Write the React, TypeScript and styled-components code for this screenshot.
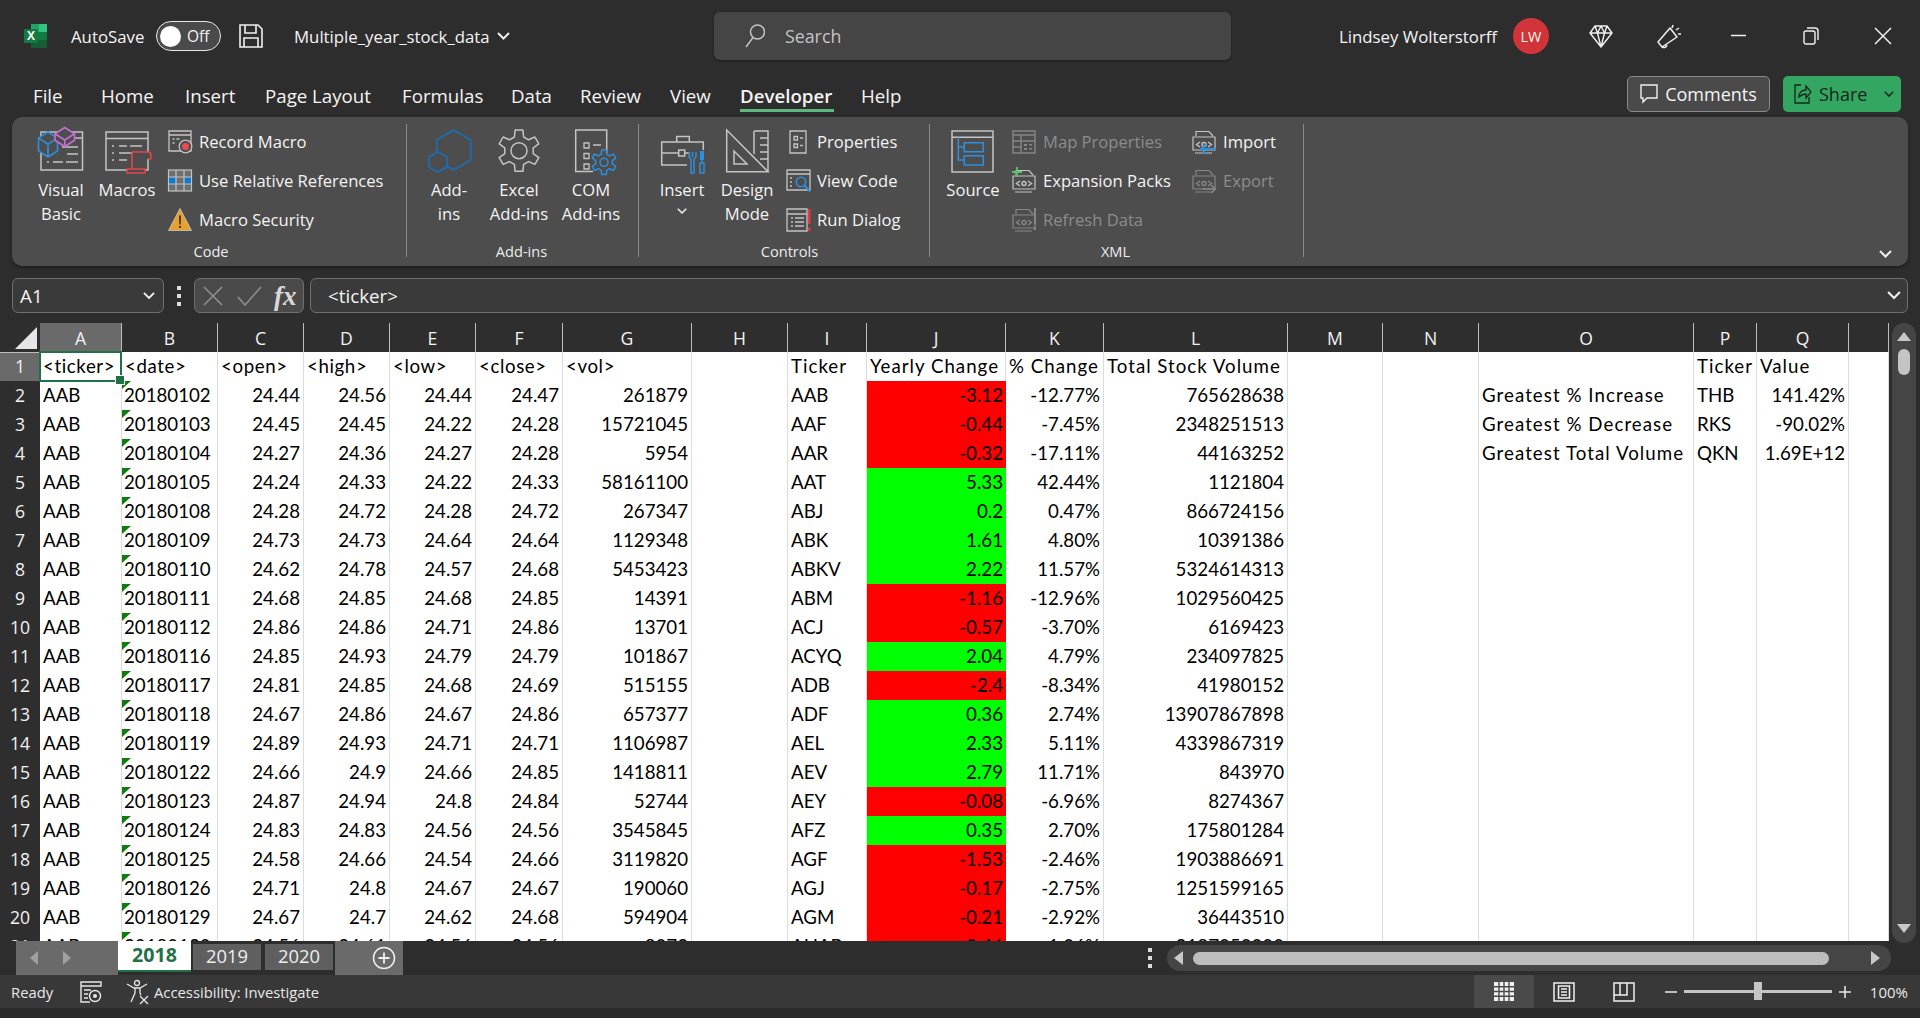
import React from "react";
import styled, { createGlobalStyle } from "styled-components";

const UI = '"Open Sans","Noto Sans",sans-serif';
const CELL = '"Lato","Liberation Sans",sans-serif';
const LINE = "#c4c4c4";
const BLUE = "#2f8fdc";

const Global = createGlobalStyle`
  html, body { margin: 0; padding: 0; background: #2d2d2d; overflow: hidden; }
  * { box-sizing: border-box; }
`;

const App_ = styled.div`
  width: 1920px; height: 1018px; display: flex; flex-direction: column;
  background: #2d2d2d; color: #f4f4f4; font-family: ${UI}; overflow: hidden;
`;

/* ---------- title bar ---------- */
const TitleBar = styled.div`
  height: 66px; display: flex; align-items: center; padding: 6px 0 0 24px; font-size: 16.8px; flex: none;
`;
const AutoSave = styled.span` margin-left: 23px; width: 85px; `;
const Toggle = styled.div`
  width: 65px; height: 30px; border: 1.5px solid #e8e8e8; border-radius: 15px; background: #4a4a4a;
  display: flex; align-items: center; padding-left: 3px; gap: 6px; font-size: 15.5px;
`;
const Knob = styled.span` width: 21px; height: 21px; border-radius: 50%; background: #fff; `;
const SaveSlot = styled.span` margin-left: 18px; display: flex; `;
const FileName = styled.span` margin-left: 31px; width: 203px; white-space: nowrap; `;
const SearchBox = styled.div`
  margin-left: 204px; width: 517px; height: 48px; background: #454545; border-radius: 6px; display: flex; align-items: center;
  padding-left: 31px; gap: 20px; color: #c4c4c4; box-shadow: 0 1px 2px #1c1c1c; font-size: 17.8px;
`;
const TitleRight = styled.div` margin-left: auto; display: flex; align-items: center; `;
const UserName = styled.span` width: 174px; white-space: nowrap; `;
const Avatar = styled.span`
  width: 36px; height: 36px; border-radius: 50%; background: #d13438; display: flex; align-items: center; justify-content: center; font-size: 14.5px;
`;
const WinBtn = styled.span<{ $ml: number }>` margin-left: ${(p) => p.$ml}px; display: flex; `;

/* ---------- ribbon tabs ---------- */
const TabRow = styled.div` height: 51px; display: flex; flex: none; padding-left: 33px; font-size: 18.7px; position: relative; `;
const MenuTab = styled.div<{ $w: number; $active?: boolean }>`
  width: ${(p) => p.$w}px; padding-top: 17px; line-height: 26px; position: relative; white-space: nowrap;
  font-weight: ${(p) => (p.$active ? 600 : 400)};
  ${(p) => p.$active && `&::after { content: ""; position: absolute; left: 0; top: 43px; width: 94px; height: 3px; background: #5cb87e; }`}
`;
const RightBtns = styled.div` margin-left: auto; display: flex; padding: 10px 19px 0 0; gap: 13px; `;
const CommentBtn = styled.div`
  width: 143px; height: 36px; border: 1px solid #8a8a8a; border-radius: 5px; background: #4a4a4a; display: flex; align-items: center;
  justify-content: center; gap: 7px; font-size: 18px;
`;
const ShareBtn = styled.div`
  width: 118px; height: 36px; border-radius: 5px; background: #33a661; color: #14261b; display: flex; align-items: center; padding-left: 11px; gap: 7px; font-size: 18px;
`;
const ShareCaret = styled.span` margin-left: 10px; display: flex; `;

/* ---------- ribbon ---------- */
const Ribbon = styled.div`
  height: 149px; margin: 0 12px; background: #4d4d4d; border-radius: 10px; flex: none; display: flex; padding: 7px 0 6px;
  box-shadow: 0 2px 3px #1e1e1e; font-size: 16.6px;
`;
const Group = styled.div<{ $w: number; $pl: number }>`
  width: ${(p) => p.$w}px; padding-left: ${(p) => p.$pl}px; display: flex; flex-direction: column;
`;
const GroupBody = styled.div` display: flex; flex: 1; `;
const GroupLabel = styled.div<{ $shift?: number }>`
  height: 18px; line-height: 18px; text-align: center; font-size: 14.6px; color: #ececec; padding-right: ${(p) => p.$shift ?? 0}px;
`;
const Sep = styled.div` width: 1px; height: 133px; background: #8a8a8a; flex: none; `;
const Big = styled.div<{ $w: number }>`
  width: ${(p) => p.$w}px; display: flex; flex-direction: column; align-items: center; text-align: center; line-height: 24px; padding-top: 1px; white-space: nowrap;
  svg { margin-bottom: 5px; overflow: visible; }
`;
const InsertCaret = styled.span` display: flex; height: 24px; align-items: center; `;
const SmallCol = styled.div<{ $ml?: number; $w?: number }>`
  margin: -2px 0 0 ${(p) => p.$ml ?? 0}px; width: ${(p) => (p.$w ? `${p.$w}px` : "auto")}; display: flex; flex-direction: column;
`;
const SmallRow = styled.div<{ $dim?: boolean }>`
  height: 39px; display: flex; align-items: center; gap: 7px; white-space: nowrap; color: ${(p) => (p.$dim ? "#8c8c8c" : "#f4f4f4")};
  svg { overflow: visible; flex: none; ${(p) => (p.$dim ? "opacity: .48;" : "")} }
`;
const Collapse = styled.div` margin-left: auto; align-self: flex-end; padding: 0 16px 2px 0; display: flex; `;

/* ---------- formula bar ---------- */
const FormulaBar = styled.div` height: 35px; margin: 12px 12px 10px; display: flex; align-items: center; flex: none; `;
const NameBox = styled.div`
  width: 152px; height: 35px; border: 1px solid #6e6e6e; border-radius: 6px; background: #3a3a3a; display: flex; align-items: center; justify-content: space-between;
  padding: 0 8px 0 7px; font-size: 18.8px;
`;
const Dots = styled.div<{ $ml: number; $mr: number }>`
  margin: 0 ${(p) => p.$mr}px 0 ${(p) => p.$ml}px; width: 4px; display: flex; flex-direction: column; gap: 4px;
  i { width: 4px; height: 4px; background: #dcdcdc; display: block; }
`;
const FxBox = styled.div`
  width: 110px; height: 35px; border: 1px solid #6e6e6e; border-radius: 6px; background: #4a4a4a; display: flex; align-items: center; padding-left: 8px; gap: 14px;
`;
const FxText = styled.span` font-family: "Liberation Serif", serif; font-style: italic; font-weight: 700; font-size: 27px; line-height: 30px; color: #d8d8d8; margin-left: -2px; `;
const FormulaInput = styled.div`
  flex: 1; margin-left: 6px; height: 35px; border: 1px solid #6e6e6e; border-radius: 6px; background: #3a3a3a; display: flex; align-items: center;
  justify-content: space-between; padding: 0 6px 0 17px; font-size: 18.8px;
`;

/* ---------- sheet ---------- */
const SheetArea = styled.div` height: 618px; display: flex; flex: none; `;
const Pane = styled.div` width: 1889px; height: 618px; overflow: hidden; position: relative; flex: none; `;
const COLS = [40, 82, 96, 86, 86, 86, 87, 129, 96, 79, 139, 98, 184, 95, 96, 215, 63, 92, 40];
const Row = styled.div`
  display: grid; grid-template-columns: ${COLS.map((c) => `${c}px`).join(" ")}; height: 29px;
`;
const ColHead = styled.div<{ $on?: boolean }>`
  background: ${(p) => (p.$on ? "#6a6a6a" : "#2e2e2e")}; border-right: 1px solid #bdbdbd; border-bottom: 1px solid #bdbdbd; font-size: 17.6px; line-height: 27px; text-align: center; padding-top: 2px; color: #f2f2f2;
`;
const Corner = styled.div`
  background: #2e2e2e; border-bottom: 1px solid #bdbdbd; position: relative;
  &::after { content: ""; position: absolute; left: 15px; top: 4px; width: 22px; height: 22px; background: #e6e6e6; clip-path: polygon(100% 0, 100% 100%, 0 100%); }
`;
const RowHead = styled.div<{ $on?: boolean }>`
  background: ${(p) => (p.$on ? "#6a6a6a" : "#2e2e2e")}; border-bottom: 1px solid #bdbdbd; font-size: 17.6px; line-height: 29px; text-align: center; color: #f2f2f2;
`;
const Cell = styled.div<{ $right?: boolean; $fill?: string; $tri?: boolean; $ls?: number }>`
  background: ${(p) => p.$fill ?? "#fff"}; color: #000; font-family: ${CELL}; font-size: 18.7px; line-height: 29px; white-space: nowrap; position: relative;
  padding: 0 3px 0 ${(p) => (p.$tri ? 2 : 3)}px; text-align: ${(p) => (p.$right ? "right" : "left")};
  letter-spacing: ${(p) => p.$ls ?? 0}px;
  ${(p) => (p.$fill ? "" : "border-right: 1px solid #dcdcdc; border-bottom: 1px solid #dcdcdc;")}
  ${(p) => p.$tri && `&::before { content: ""; position: absolute; left: 0; top: 0; width: 9px; height: 8px; background: #107c10; clip-path: polygon(0 0, 100% 0, 0 100%); }`}
`;
const Selection = styled.div`
  position: absolute; left: 39px; top: 28px; width: 83px; height: 31px; border: 2px solid #1f7246; pointer-events: none;
  &::after { content: ""; position: absolute; right: -5px; bottom: -5px; width: 8px; height: 8px; background: #1f7246; border: 1px solid #fff; }
`;
const VScroll = styled.div`
  margin: 0 0 0 3px; width: 24px; height: 620px; background: #454545; border-radius: 12px; position: relative; display: flex; flex-direction: column; align-items: center; padding-top: 9px;
`;
const VThumb = styled.div` width: 12px; height: 26px; border-radius: 6px; background: #c4c4c4; margin-top: 8px; `;
const Tri = styled.div<{ $dir: "up" | "down" | "left" | "right"; $c?: string; $s?: number }>`
  flex: none; background: ${(p) => p.$c ?? "#c8c8c8"};
  width: ${(p) => (p.$dir === "up" || p.$dir === "down" ? 14 : p.$s ?? 8)}px; height: ${(p) => (p.$dir === "up" || p.$dir === "down" ? 9 : 14)}px;
  clip-path: ${(p) =>
    ({ up: "polygon(50% 0,100% 100%,0 100%)", down: "polygon(0 0,100% 0,50% 100%)", left: "polygon(100% 0,100% 100%,0 50%)", right: "polygon(0 0,100% 50%,0 100%)" })[p.$dir]};
`;
const VDown = styled.div` margin-top: auto; padding-bottom: 10px; `;

/* ---------- sheet tabs ---------- */
const SheetBar = styled.div` height: 34px; display: flex; flex: none; padding-left: 16px; position: relative; `;
const Nav = styled.div` width: 102px; background: #6a6a6a; display: flex; align-items: center; padding-left: 14px; gap: 25px; `;
const ActiveTab = styled.div`
  width: 73px; height: 31px; background: #fff; border-bottom: 2px solid #1f7246; color: #1f7246; font-weight: 700; font-size: 19.6px; text-align: center; line-height: 28px;
`;
const SheetTab = styled.div`
  width: 72px; height: 31px; background: #5f5f5f; border: 2px solid #2d2d2d; border-top-width: 3px; color: #eee; font-size: 18.4px; text-align: center; line-height: 24px;
`;
const AddZone = styled.div`
  width: 68px; background: #6a6a6a; margin-left: 0; display: flex; align-items: center; justify-content: flex-end; padding: 0 7px 0 0;
`;
const SheetRight = styled.div` margin-left: auto; display: flex; align-items: center; padding-right: 29px; `;
const HTrack = styled.div`
  margin-left: 15px; width: 724px; height: 26px; background: #454545; border-radius: 13px; display: flex; align-items: center; padding: 0 11px 0 7px;
`;
const HThumb = styled.div` margin-left: 10px; width: 636px; height: 13px; background: #bdbdbd; border-radius: 7px; margin-right: auto; `;

/* ---------- status ---------- */
const StatusBar = styled.div` height: 33px; background: #383838; display: flex; align-items: center; padding-left: 11px; font-size: 14.8px; flex: none; color: #e8e8e8; `;
const Ready = styled.span` width: 69px; padding-top: 1px; `;
const StatusIcon = styled.span<{ $ml?: number }>` display: flex; margin-left: ${(p) => p.$ml ?? 0}px; `;
const Access = styled.span` margin-left: 4px; padding-top: 1px; white-space: nowrap; `;
const StatusRight = styled.div` margin-left: auto; display: flex; align-items: center; height: 33px; `;
const ViewBtn = styled.div<{ $on?: boolean }>`
  width: 60px; height: 33px; display: flex; align-items: center; justify-content: center; background: ${(p) => (p.$on ? "#4a4a4a" : "transparent")};
`;
const Zoomer = styled.div` margin-left: 11px; display: flex; align-items: center; gap: 7px; font-size: 20px; font-weight: 300; `;
const ZoomTrack = styled.div`
  width: 148px; height: 3px; background: #c4c4c4; position: relative;
  &::after { content: ""; position: absolute; left: 70px; top: -8px; width: 8px; height: 18px; background: #c4c4c4; }
`;
const Percent = styled.span` margin: 0 12px 0 19px; font-size: 15px; `;
const BottomStrip = styled.div` height: 10px; background: #2b2b2b; flex: none; `;

/* ---------- drawings ---------- */
const gear = (cx: number, cy: number, R: number, r: number, n = 6) => {
  const pts: string[] = [];
  for (let i = 0; i < n; i++) {
    const a = (i * 2 * Math.PI) / n - Math.PI / 2;
    const w = Math.PI / n;
    const p = (rad: number, t: number) => `${(cx + rad * Math.cos(t)).toFixed(1)} ${(cy + rad * Math.sin(t)).toFixed(1)}`;
    pts.push(p(r, a - w * 0.62), p(R, a - w * 0.36), p(R, a + w * 0.36), p(r, a + w * 0.62));
  }
  return `M${pts.join("L")}Z`;
};

const S = { fill: "none", stroke: LINE, strokeWidth: 1.5 } as const;
const B = { fill: "none", stroke: BLUE, strokeWidth: 1.5 } as const;
const I48 = ({ children }: { children: React.ReactNode }) => <svg width="48" height="48" viewBox="0 0 48 48">{children}</svg>;
const I24 = ({ children }: { children: React.ReactNode }) => <svg width="24" height="24" viewBox="0 0 24 24">{children}</svg>;

const cube = (x: number, y: number, w: number, h: number, c: string) => {
  const t = w * 0.32;
  return (
    <g fill="#4d4d4d" stroke={c} strokeWidth="1.6" strokeLinejoin="round">
      <path d={`M${x + w / 2} ${y}L${x + w} ${y + t}V${y + h - t}L${x + w / 2} ${y + h}L${x} ${y + h - t}V${y + t}Z`} />
      <path d={`M${x} ${y + t}L${x + w / 2} ${y + 2 * t}L${x + w} ${y + t}M${x + w / 2} ${y + 2 * t}V${y + h}`} fill="none" />
    </g>
  );
};

const VBIcon = () => (
  <I48>
    <path {...S} d="M4 7h41.5v38H4zM4 13h41.5" />
    <path {...S} d="M10 37h2M16 37h10M29 37h12M30 29h11M25 22h16" strokeWidth="1.3" />
    {cube(1.5, 7, 19, 25, BLUE)}
    {cube(18, 2.5, 19.5, 19, "#c56fd3")}
  </I48>
);
const MacrosIcon = () => (
  <I48>
    <path {...S} d="M3 7h42v38H3zM3 13.5h42" />
    <path {...S} strokeWidth="1.3" d="M9 21h2M16 21h8M27 21h12M9 28h2M16 28h14M9 35h2M16 35h8" />
    <path fill="#4d4d4d" stroke="#e2474c" strokeWidth="1.6" d="M29 27h16c2 0 2.8 1 2.8 2.8V34h-3M29 27c0 0 0 1 0 3V44M44.500 27v0M29 44h-5v4h18v-4H29" />
  </I48>
);
const AddInsIcon = () => (
  <I48>
    <path fill="none" stroke="#1a6fb5" strokeWidth="1.7" strokeLinejoin="round" d="M11.700 27V15L28.700 5l17 10v20l-17 10-6.500-3.800" />
    <path fill="none" stroke="#1a6fb5" strokeWidth="1.7" strokeLinejoin="round" d="M13 27l9 5v10l-9 5-9-5V32z" />
  </I48>
);
const ExcelAddIcon = () => (
  <I48>
    <path {...S} strokeLinejoin="round" d={gear(24, 25.7, 21, 14.5)} />
    <circle {...S} cx="24" cy="25.700" r="8" />
  </I48>
);
const ComIcon = () => (
  <I48>
    <path {...S} d="M26 46.500H8.700V5h31v23" />
    <path {...S} d="M17 18h5v5h-5zM17 28.500h5v5h-5zM17 39h5v5h-5z" strokeWidth="1.3" />
    <path {...S} d="M26 20h8M26 30h4" strokeWidth="1.3" />
    <path {...B} strokeLinejoin="round" d={gear(37, 37.3, 12.5, 8.5)} fill="#4d4d4d" />
    <circle {...B} cx="37" cy="37.300" r="4" />
  </I48>
);
const InsertIcon = () => (
  <I48>
    <path {...S} d="M29 40H3.700V17h41.600v8M18.700 17v-5.500h12.600V17M3.700 28h17M27 28h5" />
    <rect {...S} x="20.700" y="25" width="6" height="6" />
    <path {...B} d="M31 27v5l2 2v14h3V34l2-2v-5M34.500 27v5" />
    <path fill={BLUE} d="M42 26h4v9h-4z" />
    <path {...B} d="M44 35v3M42 38h4v10h-4z" />
  </I48>
);
const DesignIcon = () => (
  <I48>
    <path {...S} d="M3.700 5v41.700H45L3.700 5zM11 26v13h13zM31 6h14v40.700M31 6v23" strokeLinejoin="miter" />
    <path {...S} d="M37 13h8M37 20h8M37 27h8M37 34h8" strokeWidth="1.3" />
  </I48>
);
const SourceIcon = () => (
  <I48>
    <path {...S} d="M3 6h41v41H3zM3 12.300h41" />
    <path {...B} d="M15.300 17.700h19v9h-19zM15.300 30.700h19V40h-19zM9.300 12.300V35h6M9.300 22h6" />
  </I48>
);
const RecordIcon = () => (
  <I24>
    <path {...S} d="M1 1h22v20H1zM1 5h22M4.500 9h2M4.500 13h2M8.500 9h3" strokeWidth="1.3" />
    <circle cx="17.500" cy="16.500" r="6.300" fill="#4d4d4d" stroke={LINE} strokeWidth="1.3" />
    <circle cx="17.500" cy="16.500" r="3.500" fill="#ea4a50" />
  </I24>
);
const RelRefIcon = () => (
  <I24>
    <rect x="0.500" y="1" width="23" height="21" fill="#6f6f6f" stroke={LINE} strokeWidth="1.200" />
    <rect x="1" y="8" width="7" height="7" fill="#0f7ad1" />
    <rect x="16" y="8" width="7" height="7" fill="#0f7ad1" />
    <path fill="none" stroke={LINE} strokeWidth="1.200" d="M8 1v21M16 1v21M1 8h22M1 15h22" />
  </I24>
);
const SecurityIcon = () => (
  <I24>
    <path d="M12 0.500L23.500 22.500H0.500z" fill="#e8a02f" stroke="#c9c9c9" strokeWidth="0.800" strokeLinejoin="round" />
    <path d="M11 7.500h2l-.3 9h-1.400zM11 18h2v2h-2z" fill="#333" />
  </I24>
);
const PropsIcon = () => (
  <I24>
    <path {...S} d="M4 1h16v22H4zM8 6.500h3.500V10H8zM8 14h3.500v3.500H8zM14 8h3M14 15.500h3" strokeWidth="1.300" />
  </I24>
);
const ViewCodeIcon = () => (
  <I24>
    <path {...S} d="M1 1h23v20H1zM1 5h23" strokeWidth="1.300" />
    <path {...S} d="M4 9h2M4 13h2M4 17h2" strokeWidth="1.300" />
    <circle cx="15" cy="13" r="4.700" fill="none" stroke={BLUE} strokeWidth="1.600" />
    <path stroke={BLUE} strokeWidth="2" d="M18.500 16.500l5.500 6" />
  </I24>
);
const RunDialogIcon = () => (
  <I24>
    <path {...S} d="M1 1h20v22H1zM1 6h20M5 10h2M9 10h9M5 14h2M9 14h9M5 18h2M9 18h9" strokeWidth="1.300" />
    <path d="M22 1h2.400v15H22zM22 19h2.400v4H22z" fill="#e8383e" />
  </I24>
);
const codeGlyph = "M8 12l-3.500 2.500L8 17M16 12l3.500 2.500L16 17";
const MapIcon = () => (
  <I24>
    <path {...S} d="M1 1h22v22H1zM1 5h22M1 11h8M1 17h8M9 5v18M9 11h14v12" strokeWidth="1.400" />
    <path fill={LINE} d="M12 14h3v2h-3zM12 18h3v2h-3zM17 14h3v1.500h-3zM17 18h3v1.500h-3z" />
  </I24>
);
const DocIcon = ({ arrow, plus, bar }: { arrow?: string; plus?: boolean; bar?: boolean }) => (
  <I24>
    <path {...S} strokeWidth="1.200" d="M4 6V1.500h13L21 6M1 7h22v13H1zM3 23h17" />
    <path {...S} strokeWidth="1.400" d={codeGlyph} />
    <circle {...S} strokeWidth="1.400" cx="12" cy="14.500" r="2" />
    {plus && <path stroke="#58c26e" strokeWidth="1.800" d="M5 -2v10M0 3h10" />}
    {bar && <path stroke={LINE} strokeWidth="2" d="M23 0v16M23 19v3" />}
    {arrow === "in" && <path fill="none" stroke={BLUE} strokeWidth="1.800" d="M24 19H10M14 14l-5 5 5 5" />}
    {arrow === "out" && <path fill="none" stroke={LINE} strokeWidth="1.500" d="M10 20h13M19 16l4.500 4-4.500 4" />}
  </I24>
);

const ExcelLogo = () => (
  <svg width="24" height="26" viewBox="0 0 24 26">
    <path fill="#185c37" d="M7 1h16v24H7z" />
    <path fill="#21a366" d="M7 1h16v8H7z" />
    <path fill="#33c481" d="M15 1h8v8h-8z" />
    <path fill="#107c41" d="M7 9h16v8H7z" />
    <rect x="0" y="6" width="14" height="14" rx="1" fill="#107c41" />
    <text x="7" y="17" textAnchor="middle" fontFamily="Open Sans" fontWeight="700" fontSize="12" fill="#fff">X</text>
  </svg>
);
const Chevron = ({ c = "#f0f0f0", w = 13 }: { c?: string; w?: number }) => (
  <svg width={w} height={w * 0.62} viewBox="0 0 13 8"><path d="M1 1l5.500 5.500L12 1" fill="none" stroke={c} strokeWidth="2" /></svg>
);

type R = [string, string, string, string, string, string, string, string, string, string];
const DATA: R[] = [
  ["20180102","24.44","24.56","24.44","24.47","261879","AAB","-3.12","-12.77%","765628638"],
  ["20180103","24.45","24.45","24.22","24.28","15721045","AAF","-0.44","-7.45%","2348251513"],
  ["20180104","24.27","24.36","24.27","24.28","5954","AAR","-0.32","-17.11%","44163252"],
  ["20180105","24.24","24.33","24.22","24.33","58161100","AAT","5.33","42.44%","1121804"],
  ["20180108","24.28","24.72","24.28","24.72","267347","ABJ","0.2","0.47%","866724156"],
  ["20180109","24.73","24.73","24.64","24.64","1129348","ABK","1.61","4.80%","10391386"],
  ["20180110","24.62","24.78","24.57","24.68","5453423","ABKV","2.22","11.57%","5324614313"],
  ["20180111","24.68","24.85","24.68","24.85","14391","ABM","-1.16","-12.96%","1029560425"],
  ["20180112","24.86","24.86","24.71","24.86","13701","ACJ","-0.57","-3.70%","6169423"],
  ["20180116","24.85","24.93","24.79","24.79","101867","ACYQ","2.04","4.79%","234097825"],
  ["20180117","24.81","24.85","24.68","24.69","515155","ADB","-2.4","-8.34%","41980152"],
  ["20180118","24.67","24.86","24.67","24.86","657377","ADF","0.36","2.74%","13907867898"],
  ["20180119","24.89","24.93","24.71","24.71","1106987","AEL","2.33","5.11%","4339867319"],
  ["20180122","24.66","24.9","24.66","24.85","1418811","AEV","2.79","11.71%","843970"],
  ["20180123","24.87","24.94","24.8","24.84","52744","AEY","-0.08","-6.96%","8274367"],
  ["20180124","24.83","24.83","24.56","24.56","3545845","AFZ","0.35","2.70%","175801284"],
  ["20180125","24.58","24.66","24.54","24.66","3119820","AGF","-1.53","-2.46%","1903886691"],
  ["20180126","24.71","24.8","24.67","24.67","190060","AGJ","-0.17","-2.75%","1251599165"],
  ["20180129","24.67","24.7","24.62","24.68","594904","AGM","-0.21","-2.92%","36443510"],
  ["20180130","24.56","24.61","24.56","24.56","8073","AHAB","-0.46","-1.06%","3187050000"],
];
const HEAD = ["<ticker>","<date>","<open>","<high>","<low>","<close>","<vol>","","Ticker","Yearly Change","% Change","Total Stock Volume","","","","Ticker","Value",""];
const SIDE: Record<number, [string, string, string]> = {
  0: ["Greatest % Increase", "THB", "141.42%"],
  1: ["Greatest % Decrease", "RKS", "-90.02%"],
  2: ["Greatest Total Volume", "QKN", "1.69E+12"],
};
const LETTERS = "ABCDEFGHIJKLMNOPQR".split("");
const MENU: [string, number][] = [["File",68],["Home",84],["Insert",80],["Page Layout",137],["Formulas",109],["Data",69],["Review",90],["View",70],["Developer",121],["Help",60]];

export default function App() {
  return (
    <App_>
      <Global />
      <TitleBar>
        <ExcelLogo />
        <AutoSave>AutoSave</AutoSave>
        <Toggle><Knob />Off</Toggle>
        <SaveSlot>
          <svg width="24" height="24" viewBox="0 0 24 24"><path d="M1 1h18l4 4v18H1zM6 1v8h11V1M5 23v-9h14v9" fill="none" stroke="#f0f0f0" strokeWidth="1.600" /></svg>
        </SaveSlot>
        <FileName>Multiple_year_stock_data</FileName>
        <Chevron />
        <SearchBox>
          <svg width="20" height="24" viewBox="0 0 20 24"><circle cx="12.500" cy="8" r="7" fill="none" stroke="#c4c4c4" strokeWidth="1.500" /><path d="M8 13.500L1 23" stroke="#c4c4c4" strokeWidth="1.500" /></svg>
          Search
        </SearchBox>
        <TitleRight>
          <UserName>Lindsey Wolterstorff</UserName>
          <Avatar>LW</Avatar>
          <WinBtn $ml={40}><svg width="24" height="24" viewBox="0 0 24 24"><path d="M6 2h12l5 7-11 14L1 9zM1 9h22M8.500 9L12 23l3.500-14M6 2l2.500 7L12 2l3.500 7L18 2" fill="none" stroke="#f0f0f0" strokeWidth="1.400" strokeLinejoin="round" /></svg></WinBtn>
          <WinBtn $ml={44}><svg width="24" height="26" viewBox="0 0 24 26"><path d="M1 19L13 5l7 9-15 10zM5 24c2 1 4 1 5-2M15 5l1-3M19 7l3-2M21 11h3" fill="none" stroke="#f0f0f0" strokeWidth="1.500" strokeLinejoin="round" /></svg></WinBtn>
          <WinBtn $ml={50}><svg width="15" height="24" viewBox="0 0 15 24"><path d="M0 11.500h15" stroke="#f0f0f0" strokeWidth="1.500" /></svg></WinBtn>
          <WinBtn $ml={57}><svg width="16" height="18" viewBox="0 0 16 18"><rect x="1" y="4" width="11" height="13" rx="2" fill="none" stroke="#f0f0f0" strokeWidth="1.400" /><path d="M4 1h8c2 0 3 1 3 3v9" fill="none" stroke="#f0f0f0" strokeWidth="1.400" /></svg></WinBtn>
          <WinBtn $ml={55}><svg width="18" height="18" viewBox="0 0 18 18"><path d="M1 1l16 16M17 1L1 17" stroke="#f0f0f0" strokeWidth="1.500" /></svg></WinBtn>
          <WinBtn $ml={28} />
        </TitleRight>
      </TitleBar>

      <TabRow>
        {MENU.map(([t, w]) => <MenuTab key={t} $w={w} $active={t === "Developer"}>{t}</MenuTab>)}
        <RightBtns>
          <CommentBtn>
            <svg width="18" height="20" viewBox="0 0 18 20"><path d="M1 1h16v13H7l-4 4v-4H1z" fill="none" stroke="#f0f0f0" strokeWidth="1.400" /></svg>
            Comments
          </CommentBtn>
          <ShareBtn>
            <svg width="18" height="20" viewBox="0 0 18 20"><path d="M7 1H1v18h14v-6M5 13c0-5 3-7 7-7V2l5 6-5 6v-4c-3 0-5 1-7 3z" fill="none" stroke="#14261b" strokeWidth="1.300" /></svg>
            Share
            <ShareCaret><Chevron c="#14261b" w={10} /></ShareCaret>
          </ShareBtn>
        </RightBtns>
      </TabRow>

      <Ribbon>
        <Group $w={394} $pl={14}>
          <GroupBody>
            <Big $w={70}><VBIcon />Visual<br />Basic</Big>
            <Big $w={62}><MacrosIcon />Macros</Big>
            <SmallCol $ml={10}>
              <SmallRow><RecordIcon />Record Macro</SmallRow>
              <SmallRow><RelRefIcon />Use Relative References</SmallRow>
              <SmallRow><SecurityIcon />Macro Security</SmallRow>
            </SmallCol>
          </GroupBody>
          <GroupLabel $shift={10}>Code</GroupLabel>
        </Group>
        <Sep />
        <Group $w={231} $pl={8}>
          <GroupBody>
            <Big $w={68}><AddInsIcon />Add-<br />ins</Big>
            <Big $w={72}><ExcelAddIcon />Excel<br />Add-ins</Big>
            <Big $w={72}><ComIcon />COM<br />Add-ins</Big>
          </GroupBody>
          <GroupLabel $shift={10}>Add-ins</GroupLabel>
        </Group>
        <Sep />
        <Group $w={290} $pl={11}>
          <GroupBody>
            <Big $w={64}><InsertIcon />Insert<InsertCaret><Chevron w={10} /></InsertCaret></Big>
            <Big $w={66}><DesignIcon />Design<br />Mode</Big>
            <SmallCol $ml={6}>
              <SmallRow><PropsIcon />Properties</SmallRow>
              <SmallRow><ViewCodeIcon />View Code</SmallRow>
              <SmallRow><RunDialogIcon />Run Dialog</SmallRow>
            </SmallCol>
          </GroupBody>
          <GroupLabel>Controls</GroupLabel>
        </Group>
        <Sep />
        <Group $w={373} $pl={8}>
          <GroupBody>
            <Big $w={70}><SourceIcon />Source</Big>
            <SmallCol $ml={4} $w={180}>
              <SmallRow $dim><MapIcon />Map Properties</SmallRow>
              <SmallRow><DocIcon plus />Expansion Packs</SmallRow>
              <SmallRow $dim><DocIcon bar />Refresh Data</SmallRow>
            </SmallCol>
            <SmallCol>
              <SmallRow><DocIcon arrow="in" />Import</SmallRow>
              <SmallRow $dim><DocIcon arrow="out" />Export</SmallRow>
            </SmallCol>
          </GroupBody>
          <GroupLabel $shift={10}>XML</GroupLabel>
        </Group>
        <Sep />
        <Collapse><Chevron w={13} /></Collapse>
      </Ribbon>

      <FormulaBar>
        <NameBox>A1<Chevron w={12} /></NameBox>
        <Dots $ml={13} $mr={13}><i /><i /><i /></Dots>
        <FxBox>
          <svg width="20" height="20" viewBox="0 0 20 20"><path d="M1 1l18 18M19 1L1 19" stroke="#8e8e8e" strokeWidth="1.600" /></svg>
          <svg width="25" height="20" viewBox="0 0 25 20"><path d="M1 11l7 8L24 1" fill="none" stroke="#8e8e8e" strokeWidth="1.600" /></svg>
          <FxText>fx</FxText>
        </FxBox>
        <FormulaInput>{"<ticker>"}<Chevron w={14} /></FormulaInput>
      </FormulaBar>

      <SheetArea>
        <Pane>
          <Row>
            <Corner />
            {LETTERS.map((l, i) => <ColHead key={l} $on={i === 0}>{i === 17 ? "" : l}</ColHead>)}
          </Row>
          <Row>
            <RowHead $on>1</RowHead>
            {HEAD.map((h, i) => <Cell key={i} $ls={i < 7 ? 0.6 : 1}>{h}</Cell>)}
          </Row>
          {DATA.map((d, i) => {
            const side = SIDE[i];
            const up = !d[7].startsWith("-");
            return (
              <Row key={i}>
                <RowHead>{i + 2}</RowHead>
                <Cell>AAB</Cell>
                <Cell $tri>{d[0]}</Cell>
                <Cell $right>{d[1]}</Cell>
                <Cell $right>{d[2]}</Cell>
                <Cell $right>{d[3]}</Cell>
                <Cell $right>{d[4]}</Cell>
                <Cell $right>{d[5]}</Cell>
                <Cell />
                <Cell>{d[6]}</Cell>
                <Cell $right $fill={up ? "#00ff00" : "#ff0000"}>{d[7]}</Cell>
                <Cell $right>{d[8]}</Cell>
                <Cell $right>{d[9]}</Cell>
                <Cell />
                <Cell />
                <Cell $ls={1.05}>{side?.[0]}</Cell>
                <Cell>{side?.[1]}</Cell>
                <Cell $right>{side?.[2]}</Cell>
                <Cell />
              </Row>
            );
          })}
          <Selection />
        </Pane>
        <VScroll>
          <Tri $dir="up" />
          <VThumb />
          <VDown><Tri $dir="down" /></VDown>
        </VScroll>
      </SheetArea>

      <SheetBar>
        <Nav><Tri $dir="left" $c="#a0a0a0" /><Tri $dir="right" $c="#a0a0a0" /></Nav>
        <ActiveTab>2018</ActiveTab>
        <SheetTab>2019</SheetTab>
        <SheetTab>2020</SheetTab>
        <AddZone>
          <svg width="24" height="24" viewBox="0 0 24 24"><circle cx="12" cy="12" r="10.500" fill="none" stroke="#f0f0f0" strokeWidth="1.500" /><path d="M12 6.500v11M6.500 12h11" stroke="#f0f0f0" strokeWidth="1.800" /></svg>
        </AddZone>
        <SheetRight>
          <Dots $ml={0} $mr={0}><i /><i /><i /></Dots>
          <HTrack>
            <Tri $dir="left" $s={9} />
            <HThumb />
            <Tri $dir="right" $s={9} />
          </HTrack>
        </SheetRight>
      </SheetBar>

      <StatusBar>
        <Ready>Ready</Ready>
        <StatusIcon>
          <svg width="22" height="24" viewBox="0 0 22 24"><path d="M1 2h20v4H1zM1 6v16h9M4 10h7M4 14h4M4 18h4" fill="none" stroke="#e8e8e8" strokeWidth="1.400" /><circle cx="15" cy="16" r="5.500" fill="none" stroke="#e8e8e8" strokeWidth="1.400" /><circle cx="15" cy="16" r="2" fill="#e8e8e8" /></svg>
        </StatusIcon>
        <StatusIcon $ml={24}>
          <svg width="24" height="26" viewBox="0 0 24 26"><circle cx="11" cy="4" r="2.500" fill="none" stroke="#e8e8e8" strokeWidth="1.300" /><path d="M1 5l7 4h6l7-4M9 9v5l-4 9M14 9v5l1 2M14 17l8 8M22 17l-8 8" fill="none" stroke="#e8e8e8" strokeWidth="1.300" /></svg>
        </StatusIcon>
        <Access>Accessibility: Investigate</Access>
        <StatusRight>
          <ViewBtn $on><svg width="20" height="19" viewBox="0 0 20 19"><path d="M0 0h20v19H0z" fill="#f0f0f0" /><path d="M5 0v19M10 0v19M15 0v19M0 4.750h20M0 9.500h20M0 14.250h20" stroke="#4a4a4a" strokeWidth="1.400" /></svg></ViewBtn>
          <ViewBtn><svg width="22" height="20" viewBox="0 0 22 20"><path d="M1 1h20v18H1zM5.500 4h11v12h-11zM8 7h6M8 10h6M8 13h6" fill="none" stroke="#f0f0f0" strokeWidth="1.500" /></svg></ViewBtn>
          <ViewBtn><svg width="22" height="20" viewBox="0 0 22 20"><path d="M1 1h20v18H1zM1 13h13V1M7 1v12" fill="none" stroke="#f0f0f0" strokeWidth="1.500" /></svg></ViewBtn>
          <Zoomer>
            <svg width="12" height="12" viewBox="0 0 12 12"><path d="M0 6h12" stroke="#e8e8e8" strokeWidth="1.500" /></svg>
            <ZoomTrack />
            <svg width="12" height="12" viewBox="0 0 12 12"><path d="M0 6h12M6 0v12" stroke="#e8e8e8" strokeWidth="1.500" /></svg>
          </Zoomer>
          <Percent>100%</Percent>
        </StatusRight>
      </StatusBar>
      <BottomStrip />
    </App_>
  );
}
